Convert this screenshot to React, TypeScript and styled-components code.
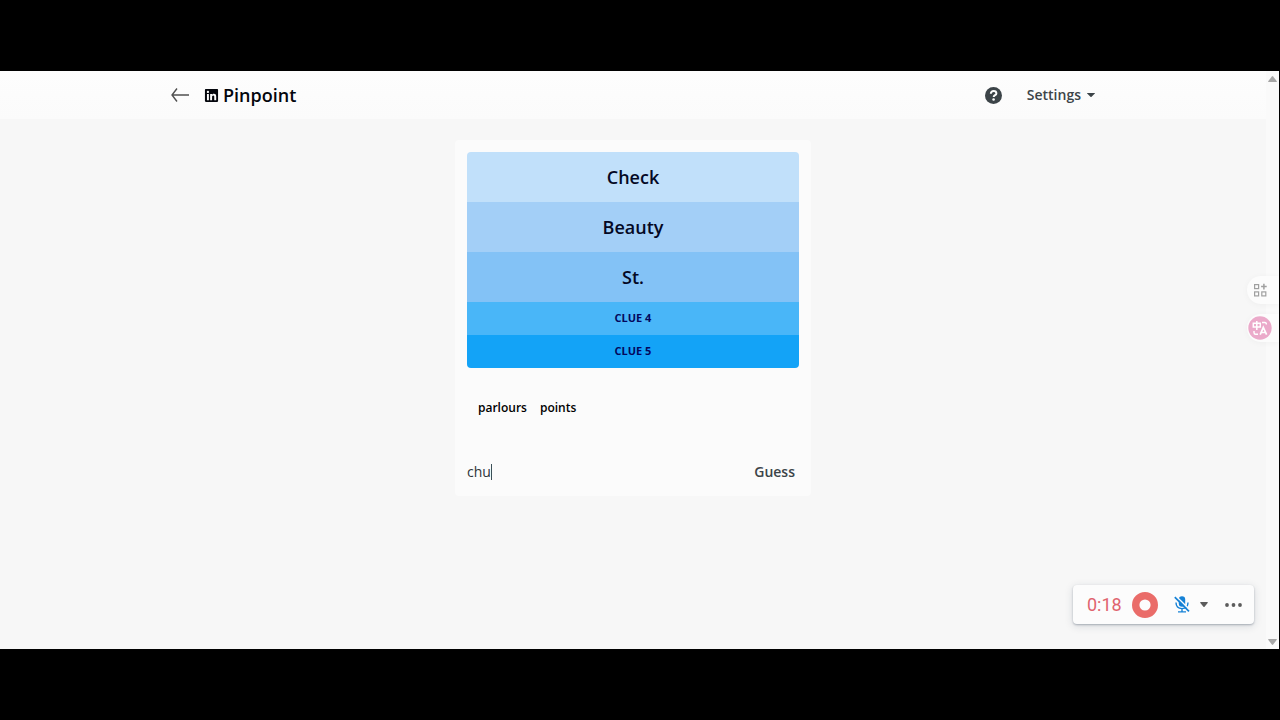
import React, { useState } from "react";
import styled, { createGlobalStyle } from "styled-components";
import { FaLinkedin } from "react-icons/fa";

const GlobalStyle = createGlobalStyle`
  * { box-sizing: border-box; }
  body {
    margin: 0;
    background: #000;
    color: #04060c;
    font-family: "Open Sans", "Noto Sans", sans-serif;
  }
  button, input { font: inherit; color: inherit; border: 0; padding: 0; margin: 0; background: none; }
  button { cursor: pointer; }
  svg { display: block; }
`;

const Screen = styled.div`
  min-height: 100vh;
  padding: 71px 1px 71px 0;
  display: flex;
`;

const Page = styled.div`
  position: relative;
  flex: 1;
  display: flex;
  background: #f7f7f7;
`;

const Content = styled.div`
  flex: 1;
  display: flex;
  flex-direction: column;
`;

const Header = styled.header`
  background: linear-gradient(#fdfdfd, #fbfbfb);
  padding: 0 24px;
`;

const HeaderInner = styled.div`
  max-width: 924px;
  height: 48px;
  margin: 0 auto;
  display: flex;
  align-items: center;
  justify-content: space-between;
`;

const Group = styled.div<{ $gap: number }>`
  display: flex;
  align-items: center;
  gap: ${(p) => p.$gap}px;
`;

const Title = styled.h1`
  display: flex;
  align-items: center;
  gap: 4px;
  margin: 0;
  font-size: 18px;
  line-height: 24px;
  font-weight: 600;
`;

const SettingsButton = styled.button`
  display: flex;
  align-items: center;
  gap: 6px;
  color: #3c4448;
  font-size: 14px;
  line-height: 20px;
  font-weight: 600;
`;

const IconButton = styled.button`
  display: flex;
  color: #3c4448;
`;

const Card = styled.main`
  width: 356px;
  max-width: 100%;
  margin: 21px auto 0;
  padding: 12px 12px 0;
  background: #fbfbfb;
  border-radius: 4px;
`;

const Board = styled.ol`
  list-style: none;
  margin: 0;
  padding: 0;
  border-radius: 4px;
  overflow: hidden;
`;

const Clue = styled.li<{ $tone: string; $open?: boolean }>`
  display: flex;
  align-items: center;
  justify-content: center;
  height: ${(p) => (p.$open ? 50 : 33)}px;
  padding-bottom: ${(p) => (p.$open ? 0 : 2)}px;
  background: ${(p) => p.$tone};
  color: ${(p) => (p.$open ? "#040824" : "#04085c")};
  font-size: ${(p) => (p.$open ? 18 : 11)}px;
  font-weight: ${(p) => (p.$open ? 600 : 700)};
`;

const Guesses = styled.ul`
  list-style: none;
  display: flex;
  gap: 13px;
  margin: 0;
  padding: 31px 11px 0;
  font-size: 12px;
  line-height: 18px;
  font-weight: 600;
  color: #000;
`;

const GuessForm = styled.form`
  display: flex;
  align-items: center;
  justify-content: space-between;
  margin-top: 31px;
  height: 48px;
  padding-right: 4px;
  font-size: 14px;
  line-height: 20px;
`;

const GuessInput = styled.input`
  field-sizing: content;
  outline: none;
  caret-color: transparent;
  color: #2c3438;
`;

const Caret = styled.span`
  width: 1px;
  height: 16px;
  background: #3c5058;
`;

const GuessButton = styled.button`
  color: #3c4448;
  font-weight: 600;
`;

const Scrollbar = styled.div`
  width: 13px;
  padding: 5px 2px 4px 0;
  display: flex;
  flex-direction: column;
  align-items: flex-end;
  justify-content: space-between;
  background: #fafafa;
  color: #a6a6a6;
`;

const SideTools = styled.div`
  position: absolute;
  right: 0;
  top: 205px;
  display: flex;
  flex-direction: column;
  gap: 10px;
`;

const SideTool = styled.button`
  display: flex;
  align-items: center;
  padding-left: 7px;
  width: 32px;
  height: 28px;
  border-radius: 14px 0 0 14px;
  background: #fcfcfc;
  box-shadow: 0 1px 6px rgba(0, 0, 0, 0.04);
`;

const TranslateTool = styled(SideTool)`
  padding-left: 1px;
`;

const Recorder = styled.div`
  position: absolute;
  right: 25px;
  bottom: 25px;
  width: 181px;
  height: 39px;
  padding: 0 12px 0 14px;
  display: flex;
  align-items: center;
  justify-content: space-between;
  border-radius: 4px;
  background: #fcfcfc;
  box-shadow: 0 1px 2px rgba(30, 45, 70, 0.3), 0 2px 8px rgba(30, 45, 70, 0.15);
`;

const RecorderButton = styled(IconButton)`
  color: #5c5c5c;
`;

const Timer = styled.time`
  color: #e0646e;
  font-family: Roboto, sans-serif;
  font-size: 18px;
  line-height: 24px;
`;

const clues = [
  { text: "Check", tone: "#c1e0fa", open: true },
  { text: "Beauty", tone: "#a3cff7", open: true },
  { text: "St.", tone: "#83c2f6", open: true },
  { text: "CLUE 4", tone: "#49b6f8" },
  { text: "CLUE 5", tone: "#13a3f7" },
];

const Triangle = ({ width, height, up }: { width: number; height: number; up?: boolean }) => (
  <svg width={width} height={height} viewBox="0 0 10 6" preserveAspectRatio="none" fill="currentColor" aria-hidden="true">
    <path d={up ? "M4.3 .4Q5 -.3 5.7 .4L9.8 5.2Q10 6 9 6H1Q0 6 .2 5.2Z" : "M4.3 5.6Q5 6.3 5.7 5.6L9.8 .8Q10 0 9 0H1Q0 0 .2 .8Z"} />
  </svg>
);

const BackIcon = () => (
  <svg width="18" height="16" viewBox="0 0 18 16" fill="none" stroke="#505050" strokeWidth="1.4" aria-hidden="true">
    <path d="M6 1.500 1 8l5 6.500M1 8h17" />
  </svg>
);

const HelpIcon = () => (
  <svg width="17" height="17" viewBox="0 0 16 16" aria-hidden="true">
    <circle cx="8" cy="8" r="8" fill="currentColor" />
    <path d="M5.5 6.300C5.500 4.600 6.600 3.800 8.100 3.800s2.600.8 2.600 2.200c0 1.800-2.500 1.600-2.500 3.400" fill="none" stroke="#fcfcfc" strokeWidth="1.900" />
    <circle cx="8.100" cy="11.800" r="1.200" fill="#fcfcfc" />
  </svg>
);

const GridPlusIcon = () => (
  <svg width="13" height="14" viewBox="0 0 13 14" fill="none" stroke="#a0a0a0" strokeWidth="1.200" aria-hidden="true">
    <rect x=".6" y="1.600" width="4" height="4" />
    <rect x=".6" y="8.900" width="4" height="4" />
    <rect x="7.800" y="8.900" width="4" height="4" />
    <path d="M9.900 .8v5.600M7.100 3.600h5.600" strokeWidth="1.500" />
  </svg>
);

const TranslateIcon = () => (
  <svg width="24" height="24" viewBox="0 0 24 24" aria-hidden="true">
    <circle cx="12" cy="12" r="11.700" fill="#ebaaca" />
    <g fill="none" stroke="#fff" strokeWidth="1.500">
      <path d="M5.300 7.300h7v3.800h-7zM8.800 5v9" />
      <path d="M12.200 18.700 15.300 11.300l3.300 7.400M13.300 16.500h4" strokeWidth="1.700" />
      <path d="M14 6.500h2.800q1.600 0 1.600 2M6 15v1.400q0 1.800 1.600 1.800H10" strokeWidth="1.400" />
    </g>
  </svg>
);

const RecordIcon = () => (
  <svg width="26" height="26" viewBox="0 0 26 26" aria-hidden="true">
    <circle cx="13" cy="13" r="9.300" fill="none" stroke="#ea6c69" strokeWidth="7.400" />
  </svg>
);

const MicOffIcon = () => (
  <svg width="16" height="17" viewBox="0 0 16 17" fill="none" stroke="#1682d6" strokeWidth="1.400" aria-hidden="true">
    <rect x="4.800" y=".2" width="6.400" height="10.600" rx="3.200" fill="#1682d6" stroke="none" />
    <path d="M2 6.500q0 6.100 6 6.100t6-6.100M8 12.600v3M4 15.900h8" />
    <path d="M2.400 .5 15.800 13.900" stroke="#fcfcfc" strokeWidth="1.500" />
    <path d="M.8 1.200 15 15.400" strokeWidth="1.700" />
  </svg>
);

const MoreIcon = () => (
  <svg width="17" height="4" viewBox="0 0 17 4" fill="currentColor" aria-hidden="true">
    <circle cx="2" cy="2" r="1.900" />
    <circle cx="8.500" cy="2" r="1.900" />
    <circle cx="15" cy="2" r="1.900" />
  </svg>
);

export default function App() {
  const [guess, setGuess] = useState("chu");

  return (
    <>
      <GlobalStyle />
      <Screen>
        <Page>
          <Content>
            <Header>
              <HeaderInner>
                <Group $gap={15}>
                  <IconButton aria-label="Back"><BackIcon /></IconButton>
                  <Title><FaLinkedin size={15} />Pinpoint</Title>
                </Group>
                <Group $gap={25}>
                  <IconButton aria-label="Help"><HelpIcon /></IconButton>
                  <SettingsButton>Settings<Triangle width={8} height={4} /></SettingsButton>
                </Group>
              </HeaderInner>
            </Header>
            <Card>
              <Board>
                {clues.map((c) => (
                  <Clue key={c.text} $tone={c.tone} $open={c.open}>{c.text}</Clue>
                ))}
              </Board>
              <Guesses>
                <li>parlours</li>
                <li>points</li>
              </Guesses>
              <GuessForm onSubmit={(e) => e.preventDefault()}>
                <Group $gap={0}>
                  <GuessInput aria-label="Your guess" value={guess} onChange={(e) => setGuess(e.target.value)} />
                  <Caret />
                </Group>
                <GuessButton type="submit">Guess</GuessButton>
              </GuessForm>
            </Card>
          </Content>
          <Scrollbar aria-hidden="true">
            <Triangle width={9} height={6} up />
            <Triangle width={9} height={6} />
          </Scrollbar>
          <SideTools>
            <SideTool aria-label="Extensions"><GridPlusIcon /></SideTool>
            <TranslateTool aria-label="Translate"><TranslateIcon /></TranslateTool>
          </SideTools>
          <Recorder>
            <Group $gap={10}>
              <Timer>0:18</Timer>
              <RecorderButton aria-label="Stop recording"><RecordIcon /></RecorderButton>
            </Group>
            <Group $gap={10}>
              <RecorderButton aria-label="Unmute microphone"><MicOffIcon /></RecorderButton>
              <RecorderButton aria-label="Microphone options"><Triangle width={8} height={5} /></RecorderButton>
            </Group>
            <RecorderButton aria-label="More"><MoreIcon /></RecorderButton>
          </Recorder>
        </Page>
      </Screen>
    </>
  );
}
